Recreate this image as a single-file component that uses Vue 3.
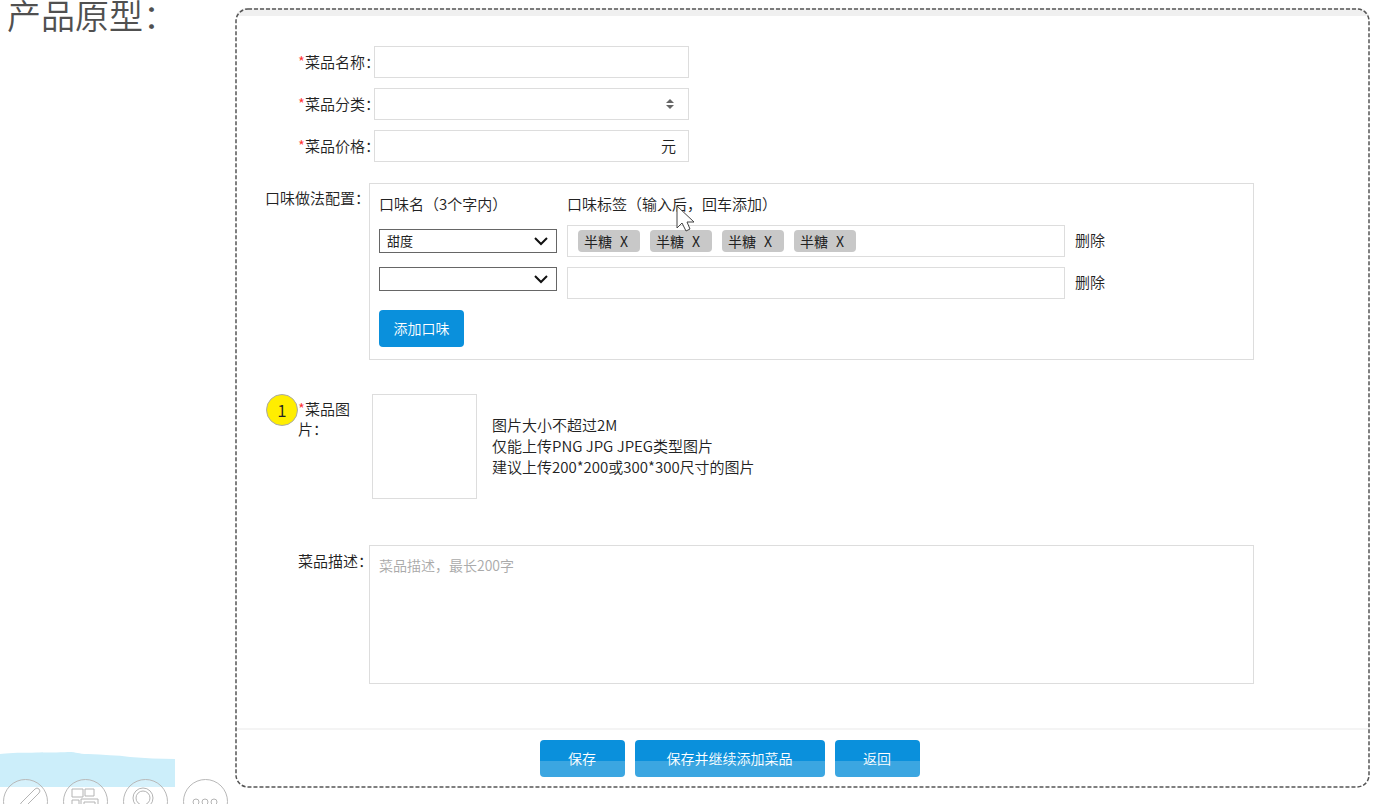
<script setup>
import { reactive } from "vue";

const dish = reactive({
  name: "",
  category: "",
  price: "",
  description: "",
});

const flavors = reactive([
  { name: "甜度", tags: ["半糖", "半糖", "半糖", "半糖"], draft: "" },
  { name: "", tags: [], draft: "" },
]);

function addFlavor() {
  flavors.push({ name: "", tags: [], draft: "" });
}

function removeFlavor(index) {
  flavors.splice(index, 1);
}

function addTag(flavor) {
  if (flavor.draft.trim()) {
    flavor.tags.push(flavor.draft.trim());
    flavor.draft = "";
  }
}
</script>

<template>
  <div class="page">
    <aside>
      <h1>产品原型：</h1>
      <div class="tools">
        <svg class="wave" width="175" height="38" viewBox="0 0 175 38">
          <path
            d="M0 4C12 2 50 3 68 2C78 2 77 4 88 4C103 5 117 5 130 7C145 8 160 9 175 9V37H0Z"
            fill="#cceefa"
          />
        </svg>
        <button type="button" aria-label="pen">
          <svg width="43" height="43" viewBox="0 0 43 43">
            <path d="M17 23L31 9Q33 7 35 9Q37 11 35 13L21 27L14 30Z" />
          </svg>
        </button>
        <button type="button" aria-label="slides">
          <svg width="43" height="43" viewBox="0 0 43 43">
            <path d="M8 9H19V17H8ZM21 9H30V16H21ZM8 20H15V27H8ZM17 19H34V32H17ZM20 22H31V32H20Z" />
          </svg>
        </button>
        <button type="button" aria-label="zoom">
          <svg width="43" height="43" viewBox="0 0 43 43">
            <circle cx="19" cy="18" r="10" />
            <circle cx="19" cy="18" r="7" />
            <path d="M27 24L35 32M25 26L33 34" />
          </svg>
        </button>
        <button type="button" aria-label="more">
          <svg width="43" height="43" viewBox="0 0 43 43">
            <circle cx="12" cy="22" r="3" />
            <circle cx="21" cy="22" r="3" />
            <circle cx="30" cy="22" r="3" />
          </svg>
        </button>
      </div>
    </aside>

    <main>
      <svg class="outline"><rect x="1" y="1" rx="12" /></svg>
      <form @submit.prevent>
        <div class="fields">
          <div class="row">
            <label for="name"><i>*</i>菜品名称：</label>
            <div class="field"><input id="name" v-model="dish.name" type="text" /></div>
          </div>
          <div class="row">
            <label for="category"><i>*</i>菜品分类：</label>
            <div class="field">
              <select id="category" v-model="dish.category">
                <option value=""></option>
              </select>
              <svg class="sort" width="8" height="10" viewBox="0 0 8 10">
                <path d="M4 0L8 4H0ZM0 6H8L4 10Z" fill="#666" />
              </svg>
            </div>
          </div>
          <div class="row">
            <label for="price"><i>*</i>菜品价格：</label>
            <div class="field">
              <input id="price" v-model="dish.price" type="text" />
              <span class="unit">元</span>
            </div>
          </div>
        </div>

        <div class="row flavor-row">
          <span class="label">口味做法配置：</span>
          <section class="flavors">
            <div class="head">
              <span>口味名（3个字内）</span>
              <span class="hint">
                口味标签（输入后，回车添加）
                <svg class="cursor" width="20" height="28" viewBox="0 0 20 28">
                  <path
                    d="M1 1V23L6 18L10 26L14 24L11 17H18Z"
                    fill="#fff"
                    stroke="#444"
                  />
                </svg>
              </span>
            </div>
            <div v-for="(flavor, index) in flavors" :key="index" class="flavor">
              <div class="picker">
                <select v-model="flavor.name" aria-label="口味名">
                  <option value=""></option>
                  <option value="甜度">甜度</option>
                </select>
                <svg width="14" height="9" viewBox="0 0 14 9">
                  <path d="M1 1L7 7L13 1" fill="none" stroke="#111" stroke-width="2" />
                </svg>
              </div>
              <div class="tags">
                <button
                  v-for="(tag, i) in flavor.tags"
                  :key="i"
                  type="button"
                  class="tag"
                  @click="flavor.tags.splice(i, 1)"
                >
                  <span>{{ tag }}</span><span>X</span>
                </button>
                <input
                  v-model="flavor.draft"
                  type="text"
                  aria-label="口味标签"
                  @keydown.enter.prevent="addTag(flavor)"
                />
              </div>
              <button type="button" class="remove" @click="removeFlavor(index)">删除</button>
            </div>
            <button type="button" class="primary" @click="addFlavor">添加口味</button>
          </section>
        </div>

        <div class="row image-row">
          <span class="badge">1</span>
          <label for="image"><i>*</i>菜品图片：</label>
          <div class="upload"><input id="image" type="file" /></div>
          <p>
            图片大小不超过2M<br />
            仅能上传PNG JPG JPEG类型图片<br />
            建议上传200*200或300*300尺寸的图片
          </p>
        </div>

        <div class="row desc-row">
          <label for="description">菜品描述：</label>
          <textarea
            id="description"
            v-model="dish.description"
            placeholder="菜品描述，最长200字"
          ></textarea>
        </div>

        <footer>
          <button type="submit" class="primary">保存</button>
          <button type="button" class="primary wide">保存并继续添加菜品</button>
          <button type="button" class="primary">返回</button>
        </footer>
      </form>
    </main>
  </div>
</template>

<style>
body {
  margin: 0;
  background: #fff;
}
</style>

<style scoped>
.page {
  display: flex;
  min-height: 100vh;
  color: #222;
  font-family: "Noto Sans CJK SC", sans-serif;
  font-size: 15px;
  font-weight: 350;
  line-height: 21px;
}
.page * {
  box-sizing: border-box;
}
button,
input,
select,
textarea {
  font: inherit;
  color: inherit;
  margin: 0;
  outline: none;
}
button {
  cursor: pointer;
}
aside {
  width: 235px;
  flex: none;
  display: flex;
  flex-direction: column;
  justify-content: space-between;
}
h1 {
  margin: 0;
  padding-left: 7px;
  color: #505050;
  font-size: 34px;
  font-weight: 350;
  line-height: 30px;
  white-space: nowrap;
}
.tools {
  position: relative;
  display: flex;
  gap: 15px;
  height: 54px;
  padding: 29px 0 0 3px;
  overflow: hidden;
}
.wave {
  position: absolute;
  top: 0;
  left: 0;
}
.tools button {
  position: relative;
  flex: none;
  width: 45px;
  height: 45px;
  padding: 0;
  border: 1px solid #b8b8b8;
  border-radius: 50%;
  background: rgba(255, 255, 255, 0.2);
}
.tools button svg {
  display: block;
  fill: none;
  stroke: #b4b4b4;
}

main {
  position: relative;
  flex: 1;
  align-self: flex-start;
  margin: 8px 15px 16px 0;
}
.outline {
  position: absolute;
  inset: 0;
  width: 100%;
  height: 100%;
  pointer-events: none;
}
.outline rect {
  width: calc(100% - 2px);
  height: calc(100% - 2px);
  fill: none;
  stroke: #555;
  stroke-width: 1.5px;
  stroke-dasharray: 4 2;
}
form {
  border-radius: 12px 12px 0 0;
  background: linear-gradient(#f0f0f0 8px, transparent 8px);
}
.fields {
  display: flex;
  flex-direction: column;
  gap: 10px;
  padding-top: 38px;
}
.row {
  display: flex;
}
i {
  color: #f33;
  font-style: normal;
}
label,
.label {
  flex: none;
  white-space: nowrap;
}
.fields label {
  width: 139px;
  padding-left: 63px;
  line-height: 32px;
}
.field {
  position: relative;
  width: 315px;
  height: 32px;
}
.field input,
.field select {
  width: 100%;
  height: 32px;
  padding: 0 30px 0 8px;
  border: 1px solid #ddd;
  border-radius: 0;
  background: transparent;
  appearance: none;
}
.sort {
  position: absolute;
  top: 11px;
  right: 15px;
}
.unit {
  position: absolute;
  top: 5px;
  right: 13px;
}

.flavor-row {
  padding: 21px 116px 0 30px;
}
.flavor-row .label {
  width: 104px;
  padding-top: 4px;
}
.flavors {
  flex: 1;
  min-height: 177px;
  padding: 9px 10px 12px 9px;
  border: 1px solid #ddd;
}
.head {
  display: flex;
  margin-bottom: 11px;
}
.head span:first-child {
  width: 188px;
}
.hint {
  position: relative;
}
.cursor {
  position: absolute;
  top: 12px;
  left: 109px;
}
.flavor {
  display: flex;
  align-items: center;
  margin-bottom: 10px;
}
.picker {
  position: relative;
  width: 178px;
  height: 24px;
  margin-right: 10px;
}
.flavor + .flavor .picker {
  align-self: flex-start;
}
.picker select {
  display: block;
  width: 100%;
  height: 24px;
  padding: 0 24px 0 7px;
  border: 1px solid #666;
  border-radius: 0;
  background: #fff;
  font-size: 13px;
  font-weight: 400;
  line-height: 22px;
  appearance: none;
}
.picker svg {
  position: absolute;
  top: 8px;
  right: 9px;
  pointer-events: none;
}
.tags {
  display: flex;
  align-items: center;
  gap: 10px;
  flex: 1;
  max-width: 498px;
  height: 32px;
  padding: 0 10px;
  border: 1px solid #ddd;
}
.tags input {
  flex: 1;
  min-width: 0;
  padding: 0;
  border: 0;
  background: transparent;
}
.tag {
  display: flex;
  justify-content: space-between;
  width: 62px;
  height: 22px;
  padding: 0 12px 0 6px;
  border: 0;
  border-radius: 4px;
  background: #c8c8c8;
  font-size: 14px;
  font-weight: 400;
  line-height: 22px;
}
.remove {
  height: 24px;
  margin-left: 10px;
  padding: 0 0 3px;
  border: 0;
  background: none;
}
.primary {
  width: 85px;
  height: 37px;
  padding: 0;
  border: 0;
  border-radius: 4px;
  background: #0a90dc;
  color: #fff;
  font-size: 14px;
}
.flavors .primary {
  display: block;
  margin-top: 11px;
}

.image-row {
  padding: 34px 116px 0 31px;
}
.badge {
  flex: none;
  width: 32px;
  height: 32px;
  border: 1px solid #aaa;
  border-radius: 50%;
  background: #ffee00;
  font-size: 17px;
  line-height: 30px;
  text-align: center;
}
.image-row label {
  width: 74px;
  padding: 5px 20px 0 0;
  line-height: 20px;
  white-space: normal;
}
.upload {
  flex: none;
  width: 105px;
  height: 105px;
  border: 1px solid #ddd;
}
.upload input {
  width: 100%;
  height: 100%;
  opacity: 0;
}
.image-row p {
  margin: 20px 0 0 15px;
}

.desc-row {
  padding: 46px 116px 0 63px;
}
.desc-row label {
  width: 71px;
  padding-top: 5px;
}
textarea {
  display: block;
  flex: 1;
  height: 139px;
  padding: 9px;
  border: 1px solid #ddd;
  border-radius: 0;
  background: transparent;
  font-size: 14px;
  resize: none;
}
textarea::placeholder {
  color: #aaa;
}
footer {
  display: flex;
  justify-content: center;
  gap: 10px;
  margin-top: 44px;
  padding: 10px 146px 11px 0;
  border-top: 2px solid #f4f4f4;
}
footer .primary {
  background: linear-gradient(#0a90dc 56%, #3ba6e1 57%);
}
footer .wide {
  width: 190px;
}
</style>
